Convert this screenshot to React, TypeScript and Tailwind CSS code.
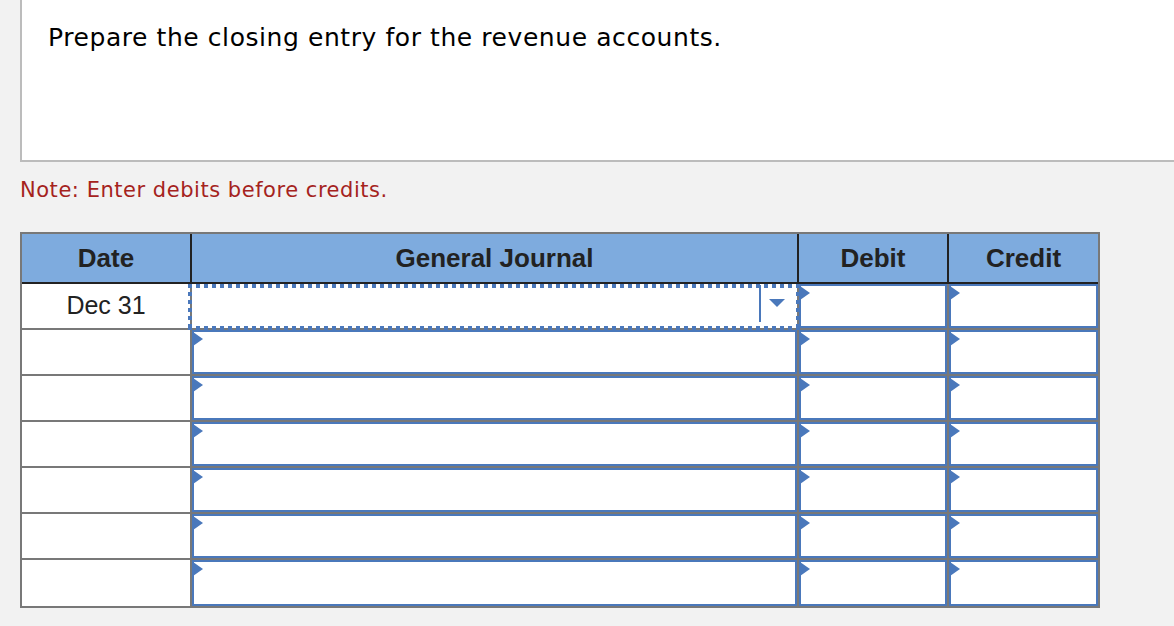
import React from "react";

function Tri() {
  return (
    <span className="absolute left-[-1px] top-0 h-0 w-0 border-y-[7px] border-l-[10px] border-y-transparent border-l-[#4a78bb]" />
  );
}

function InputBox() {
  return (
    <div className="relative h-full w-full border-2 border-[#4a78bb] bg-white">
      <Tri />
    </div>
  );
}

function SelectFocused() {
  return (
    <div className="relative h-full w-full bg-white">
      <div className="absolute left-[567px] top-[1px] h-[37px] w-[2px] bg-[#4a78bb]" />
      <div className="absolute left-[577px] top-[15px] h-0 w-0 border-x-[8.5px] border-t-[8px] border-x-transparent border-t-[#4a78bb]" />
      <div className="pointer-events-none absolute -bottom-[2px] -left-[4px] -right-[3px] top-0 z-10">
        <div className="absolute left-0 right-0 top-0 h-[4px] bg-[repeating-linear-gradient(90deg,#4a78bb_0_4px,transparent_4px_8px)]" />
        <div className="absolute bottom-0 left-0 right-0 h-[4px] bg-[repeating-linear-gradient(90deg,#4a78bb_0_4px,transparent_4px_8px)]" />
        <div className="absolute bottom-0 left-0 top-0 w-[4px] bg-[repeating-linear-gradient(180deg,#4a78bb_0_4px,transparent_4px_8px)]" />
        <div className="absolute bottom-0 right-0 top-0 w-[4px] bg-[repeating-linear-gradient(180deg,#4a78bb_0_4px,transparent_4px_8px)]" />
      </div>
    </div>
  );
}

function Row({ first, last }: { first?: boolean; last?: boolean }) {
  return (
    <div className={"flex h-[46px] " + (last ? "" : "border-b-2 border-[#787878]")}>
      <div className="flex w-[170px] items-center justify-center border-r-2 border-[#787878] bg-white text-[25px] text-[#222]">
        {first ? "Dec 31" : ""}
      </div>
      <div className="relative w-[607px] border-r-2 border-[#787878]">
        {first ? <SelectFocused /> : <InputBox />}
      </div>
      <div className="w-[150px] border-r-2 border-[#787878]">
        <InputBox />
      </div>
      <div className="w-[149px]">
        <InputBox />
      </div>
    </div>
  );
}

export default function App() {
  const rows = [0, 1, 2, 3, 4, 5, 6];
  return (
    <div className="h-[626px] overflow-hidden bg-[#f2f2f2] font-['DejaVu_Sans',sans-serif]">
      <div className="ml-[20px] h-[162px] border-b-2 border-l-2 border-[#bcbcbc] bg-white pl-[26px] pt-[23px]">
        <p className="text-[25px] leading-[30px] tracking-[0.57px] text-black">
          Prepare the closing entry for the revenue accounts.
        </p>
      </div>
      <p className="ml-[20px] mt-[15px] text-[21px] leading-[26px] tracking-[0.53px] text-[#a5231d]">
        Note: Enter debits before credits.
      </p>
      <div className="ml-[20px] mt-[29px] w-[1080px] border-2 border-[#787878] font-['Liberation_Sans',Arial,sans-serif]">
        <div className="flex h-[50px] border-b-2 border-[#222] bg-[#7eabde] text-[26px] font-bold text-[#222]">
          <div className="flex w-[170px] items-center justify-center border-r-2 border-[#222]">Date</div>
          <div className="flex w-[607px] items-center justify-center border-r-2 border-[#222]">General Journal</div>
          <div className="flex w-[150px] items-center justify-center border-r-2 border-[#222]">Debit</div>
          <div className="flex w-[149px] items-center justify-center">Credit</div>
        </div>
        {rows.map((i) => (
          <Row key={i} first={i === 0} last={i === rows.length - 1} />
        ))}
      </div>
    </div>
  );
}
